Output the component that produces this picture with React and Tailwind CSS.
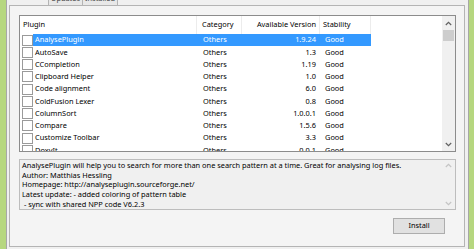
import React from 'react';

const plugins = [
  { name: 'AnalysePlugin', cat: 'Others', ver: '1.9.24', stab: 'Good', selected: true },
  { name: 'AutoSave', cat: 'Others', ver: '1.3', stab: 'Good' },
  { name: 'CCompletion', cat: 'Others', ver: '1.19', stab: 'Good' },
  { name: 'Clipboard Helper', cat: 'Others', ver: '1.0', stab: 'Good' },
  { name: 'Code alignment', cat: 'Others', ver: '6.0', stab: 'Good' },
  { name: 'ColdFusion Lexer', cat: 'Others', ver: '0.8', stab: 'Good' },
  { name: 'ColumnSort', cat: 'Others', ver: '1.0.0.1', stab: 'Good' },
  { name: 'Compare', cat: 'Others', ver: '1.5.6', stab: 'Good' },
  { name: 'Customize Toolbar', cat: 'Others', ver: '3.3', stab: 'Good' },
  { name: 'DoxyIt', cat: 'Others', ver: '0.0.1', stab: 'Good' },
];

const Chevron = ({ up, color = '#606060' }) => (
  <svg width="7" height="5" viewBox="0 0 7 5">
    <path
      d={up ? 'M0.8 4 L3.5 1.3 L6.2 4' : 'M0.8 1 L3.5 3.7 L6.2 1'}
      fill="none"
      stroke={color}
      strokeWidth="1.2"
    />
  </svg>
);

const Row = ({ p }) => (
  <div className="flex items-center h-[12.25px] shrink-0">
    <div className="w-[2px]" />
    <div className="w-[11px] h-[11px] border border-[#9a9a9a] bg-white shrink-0" />
    <div className={`flex items-center h-[12px] w-[338px] ${p.selected ? 'bg-[#3399ff] text-white' : 'text-black'}`}>
      <div className="w-[164px] pl-[2px] whitespace-nowrap">{p.name}</div>
      <div className="w-[45px] pl-[6px]">{p.cat}</div>
      <div className="w-[78px] pr-[4px] text-right">{p.ver}</div>
      <div className="w-[51px] pl-[5px]">{p.stab}</div>
    </div>
  </div>
);

export default function App() {
  return (
    <div className="w-[474px] h-[249px] flex bg-[#b6d77f] overflow-hidden font-['Noto_Sans',sans-serif] text-[7.4px] leading-[9.7px] text-black">
      <div className="w-[6px] shrink-0" />
      <div className="w-[463px] shrink-0 bg-[#f0f0f0] border-x border-[#a7a7a7] pl-[2px] pr-[3px] flex flex-col">
        {/* tabs */}
        <div className="h-[5px] flex ml-[39px] overflow-hidden">
          <div className="w-[35px] h-[5px] border-x border-[#b4b4b4] bg-[#e8e8e8] flex justify-center">
            <span className="-mt-[6px] leading-[9px] text-[#444]">Updates</span>
          </div>
          <div className="w-[35px] h-[5px] border-r border-[#b4b4b4] bg-[#e8e8e8] flex justify-center">
            <span className="-mt-[6px] leading-[9px] text-[#444]">Installed</span>
          </div>
        </div>
        {/* tab panel */}
        <div className="h-[242px] border border-[#b4b4b4] bg-[#f4f4f4] pl-[9px] pr-[8px] pt-[9px] flex flex-col">
          {/* list */}
          <div className="h-[137px] border border-[#8c8c8c] bg-white flex overflow-hidden">
            <div className="flex-1 flex flex-col overflow-hidden">
              <div className="h-[18px] shrink-0 flex items-center">
                <div className="w-[177px] h-full pl-[3px] flex items-center border-r border-[#ececec]">Plugin</div>
                <div className="w-[45px] h-full pl-[5px] flex items-center border-r border-[#ececec]">Category</div>
                <div className="w-[78px] h-full pr-[3px] flex items-center justify-end border-r border-[#ececec]">Available Version</div>
                <div className="w-[51px] h-full pl-[3px] flex items-center border-r border-[#ececec]">Stability</div>
              </div>
              {plugins.map((p) => (
                <Row key={p.name} p={p} />
              ))}
            </div>
            <div className="w-[13px] shrink-0 bg-[#f0f0f0] flex flex-col items-center">
              <div className="h-[14px] flex items-center justify-center">
                <Chevron up />
              </div>
              <div className="w-[11px] h-[11px] bg-[#cdcdcd]" />
              <div className="flex-1" />
              <div className="h-[14px] flex items-center justify-center">
                <Chevron />
              </div>
            </div>
          </div>
          {/* description */}
          <div className="mt-[7px] h-[51px] border border-[#bdbdbd] bg-[#f0f0f0] flex">
            <div className="flex-1 pl-[2px] pt-[1px] whitespace-pre">
              <div>AnalysePlugin will help you to search for more than one search pattern at a time. Great for analysing log files.</div>
              <div>Author: Matthias Hessling</div>
              <div>Homepage: http://analyseplugin.sourceforge.net/</div>
              <div>Latest update: - added coloring of pattern table</div>
              <div> - sync with shared NPP code V6.2.3</div>
            </div>
            <div className="w-[13px] shrink-0 flex flex-col items-center justify-between py-[3px]">
              <Chevron up color="#c4c4c4" />
              <Chevron color="#c4c4c4" />
            </div>
          </div>
          {/* button */}
          <div className="mt-[8px] flex justify-end pr-[11px]">
            <div className="w-[52px] h-[16px] border border-[#adadad] bg-[#e1e1e1] flex items-center justify-center">
              Install
            </div>
          </div>
        </div>
      </div>
      <div className="flex-1" />
    </div>
  );
}
